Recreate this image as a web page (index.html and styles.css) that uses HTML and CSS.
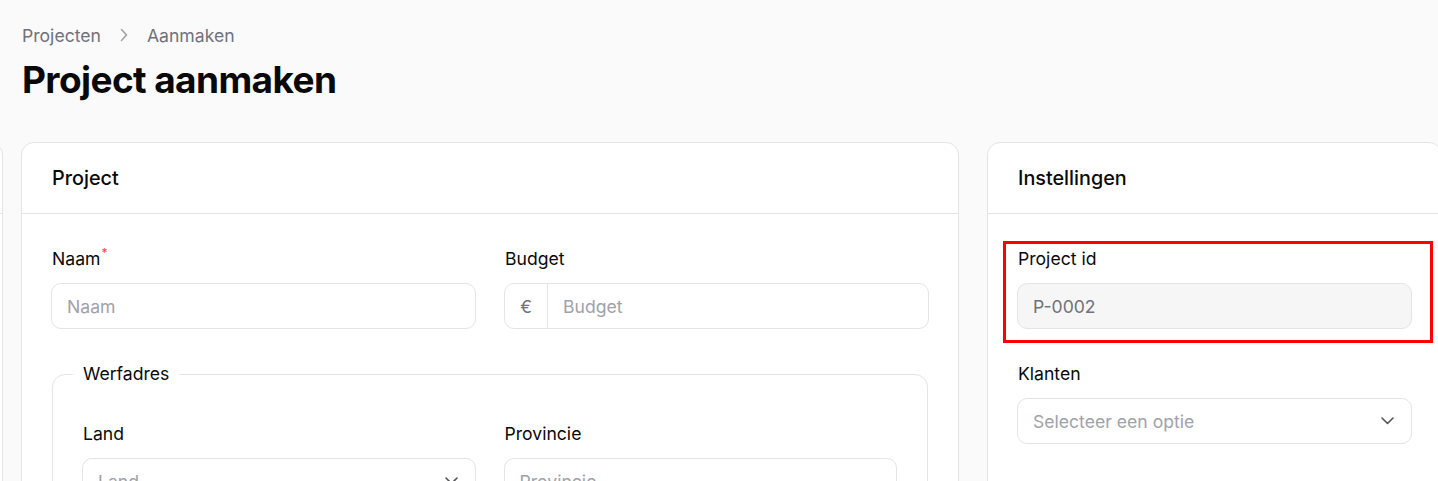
FILE: index.html
```html
<!DOCTYPE html>
<html lang="nl">
<head>
<meta charset="utf-8">
<title>Project aanmaken</title>
<link rel="stylesheet" href="styles.css">
</head>
<body>
<main class="page">
  <nav class="breadcrumb">
    <span class="crumb">Projecten</span>
    <svg class="crumb-sep" width="8" height="14" viewBox="0 0 8 14" aria-hidden="true"><polyline points="1.5,1.5 6.5,7 1.5,12.5" fill="none" stroke="#a1a1aa" stroke-width="1.6" stroke-linecap="round" stroke-linejoin="round"/></svg>
    <span class="crumb">Aanmaken</span>
  </nav>
  <h1 class="title">Project aanmaken</h1>

  <div class="cards">
    <section class="card card-stub">
      <div class="card-header"></div>
    </section>

    <section class="card card-main">
      <div class="card-header"><h2 class="card-title">Project</h2></div>
      <div class="card-body">
        <div class="row">
          <div class="field">
            <label class="label" for="naam">Naam<sup class="req">*</sup></label>
            <input class="input" id="naam" type="text" placeholder="Naam">
          </div>
          <div class="field">
            <label class="label" for="budget">Budget</label>
            <div class="input-group">
              <span class="prefix">€</span>
              <input class="input-bare" id="budget" type="text" placeholder="Budget">
            </div>
          </div>
        </div>

        <fieldset class="fieldset">
          <legend class="legend">Werfadres</legend>
          <div class="fieldset-body">
            <div class="row">
              <div class="field">
                <label class="label">Land</label>
                <div class="select">
                  <span class="select-placeholder">Land</span>
                  <svg width="13" height="8" viewBox="0 0 13 8" aria-hidden="true"><polyline points="1,1 6.5,6.5 12,1" fill="none" stroke="#52525b" stroke-width="1.6" stroke-linecap="round" stroke-linejoin="round"/></svg>
                </div>
              </div>
              <div class="field">
                <label class="label" for="provincie">Provincie</label>
                <input class="input" id="provincie" type="text" placeholder="Provincie">
              </div>
            </div>
          </div>
        </fieldset>
      </div>
    </section>

    <section class="card card-side">
      <div class="card-header"><h2 class="card-title">Instellingen</h2></div>
      <div class="card-body">
        <div class="field highlight">
          <label class="label" for="pid">Project id</label>
          <input class="input input-disabled" id="pid" type="text" value="P-0002" disabled>
        </div>
        <div class="field field-gap">
          <label class="label">Klanten</label>
          <div class="select">
            <span class="select-placeholder">Selecteer een optie</span>
            <svg width="13" height="8" viewBox="0 0 13 8" aria-hidden="true"><polyline points="1,1 6.5,6.5 12,1" fill="none" stroke="#52525b" stroke-width="1.6" stroke-linecap="round" stroke-linejoin="round"/></svg>
          </div>
        </div>
      </div>
    </section>
  </div>
</main>
</body>
</html>
```

FILE: styles.css
```css
* { box-sizing: border-box; }

html, body {
  margin: 0;
  height: 100%;
}

body {
  background: #fafafa;
  font-family: Inter, "Noto Sans", sans-serif;
  color: #09090b;
  overflow: hidden;
}

.page {
  padding: 22px 0 0 21px;
}

.breadcrumb {
  display: flex;
  align-items: center;
  gap: 19px;
  height: 26px;
  padding-left: 1px;
  font-size: 17.6px;
  font-weight: 400;
  color: #71717a;
}

.crumb-sep {
  display: block;
}

.title {
  margin: 10px 0 0 1px;
  font-size: 37px;
  line-height: 44px;
  font-weight: 700;
  letter-spacing: -0.6px;
  color: #09090b;
}

.cards {
  display: flex;
  align-items: flex-start;
  margin-top: 40px;
  margin-left: -318px;
}

.card {
  flex-shrink: 0;
  background: #fff;
  border: 1px solid #e4e4e7;
  border-radius: 13px;
  min-height: 420px;
}

.card-stub {
  width: 300px;
  margin-right: 18px;
}

.card-main {
  width: 938px;
  margin-right: 28px;
}

.card-side {
  width: 455px;
}

.card-header {
  height: 71px;
  padding: 0 29px 0 30px;
  display: flex;
  align-items: center;
  border-bottom: 1px solid #e4e4e7;
}

.card-title {
  margin: 0;
  font-size: 19.8px;
  line-height: 28px;
  font-weight: 500;
}

.card-body {
  padding: 32px 29px 30px;
}

.row {
  display: grid;
  grid-template-columns: 1fr 1fr;
  column-gap: 28px;
}

.field {
  display: flex;
  flex-direction: column;
}

.field-gap {
  margin-top: 32px;
}

.label {
  display: block;
  padding-left: 1px;
  font-size: 17.6px;
  line-height: 26px;
  font-weight: 400;
  margin-bottom: 11px;
}

.req {
  color: #ef4444;
  font-size: 12px;
  line-height: 0;
  vertical-align: 8px;
  margin-left: 1px;
}

.input {
  width: 100%;
  height: 46px;
  border: 1px solid #e4e4e7;
  border-radius: 10px;
  background: #fff;
  padding: 0 15px;
  font-family: inherit;
  font-size: 17.6px;
  color: #09090b;
  outline: none;
}

.input::placeholder,
.input-bare::placeholder {
  color: #a1a1aa;
  opacity: 1;
}

.input-disabled {
  background: #f6f6f7;
  color: #71717a;
  -webkit-text-fill-color: #71717a;
  opacity: 1;
}

.input-group {
  display: flex;
  height: 46px;
  border: 1px solid #e4e4e7;
  border-radius: 10px;
  background: #fff;
  overflow: hidden;
}

.prefix {
  width: 43px;
  flex-shrink: 0;
  display: flex;
  align-items: center;
  justify-content: center;
  border-right: 1px solid #e4e4e7;
  color: #71717a;
  font-size: 17.6px;
}

.input-bare {
  flex: 1;
  min-width: 0;
  border: none;
  padding: 0 15px;
  font-family: inherit;
  font-size: 17.6px;
  outline: none;
  background: transparent;
}

.fieldset {
  margin: 32px 1px 0;
  border: 1px solid #e4e4e7;
  border-radius: 13px;
  padding: 0;
  min-width: 0;
}

.legend {
  margin-left: 20px;
  padding: 0 10px;
  font-size: 17.6px;
  line-height: 26px;
  font-weight: 400;
}

.fieldset-body {
  padding: 34px 30px 30px 29px;
}

.select {
  height: 46px;
  border: 1px solid #e4e4e7;
  border-radius: 10px;
  background: #fff;
  padding: 0 17px 0 15px;
  display: flex;
  align-items: center;
  justify-content: space-between;
  font-size: 17.6px;
}

.select-placeholder {
  color: #a1a1aa;
}

.highlight {
  position: relative;
}

.highlight::after {
  content: "";
  position: absolute;
  left: -14px;
  right: -21px;
  top: -5px;
  bottom: -14px;
  border: 3px solid #ff0000;
  pointer-events: none;
}
```
